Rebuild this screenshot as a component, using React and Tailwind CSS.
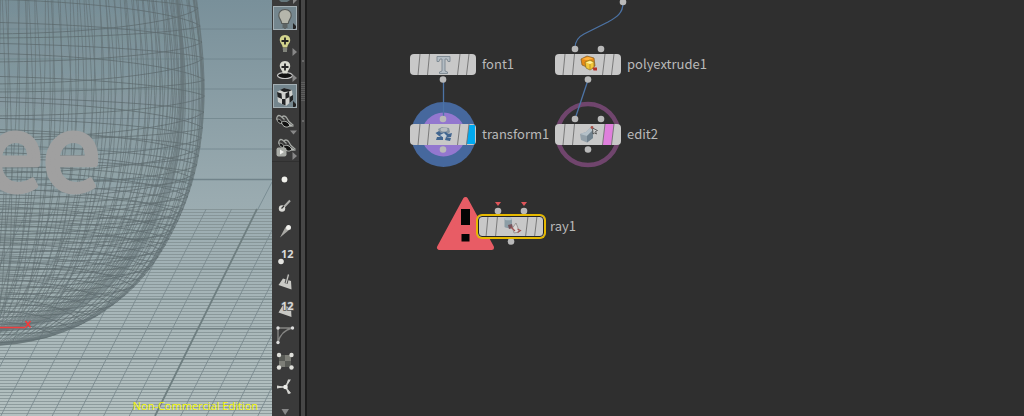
import React from "react";

const OUTLINE = [
  [197, -2], [201, 30], [204, 62], [205, 95], [203, 130], [198, 163], [189, 195],
  [179, 220], [165, 247], [149, 271], [130, 292], [103, 313], [78, 327], [48, 338], [15, 345], [-20, 347],
];

const toPath = (pts) => {
  let d = `M${pts[0][0]} ${pts[0][1]}`;
  for (let i = 1; i < pts.length - 1; i++) {
    const [x, y] = pts[i];
    const [nx, ny] = pts[i + 1];
    d += `Q${x} ${y} ${(x + nx) / 2} ${(y + ny) / 2}`;
  }
  const last = pts[pts.length - 1];
  return `${d}L${last[0]} ${last[1]}`;
};

const meridian = (sx, sy, lean = 0) =>
  toPath(OUTLINE.map(([x, y]) => [-20 + (x + 20) * sx + lean * (y - 100) * 0.1, y * sy]));

const edgeAt = (y) => {
  for (let i = 1; i < OUTLINE.length; i++) {
    const [x0, y0] = OUTLINE[i - 1];
    const [x1, y1] = OUTLINE[i];
    if (y <= y1) return x0 + ((x1 - x0) * (y - y0)) / (y1 - y0);
  }
  return 0;
};

const outer = Array.from({ length: 46 }, (_, i) => meridian(Math.sin((i + 1) * 0.034 + (i % 3) * 0.006), 1, (i % 4) * 0.12));
const inner = Array.from({ length: 34 }, (_, i) => meridian(Math.sin((i + 1) * 0.046) * 0.9, 0.955, -0.35 + (i % 3) * 0.1));
const levels = [8, 26, 42, 58, 80, 96, 112, 128, 138, 147, 156, 165];
for (let y = 173; y < 340; y += 6) levels.push(y);
const rings = levels.flatMap((y, i) => {
  const x = edgeAt(y);
  const down = [26, 12, 20][i % 3];
  const up = [12, 24, 17][i % 3];
  return [
    `M${x} ${y}C${x - 14} ${y + down * 0.5} ${x * 0.5} ${y + down} -20 ${y + down}`,
    `M${x} ${y}C${x - 14} ${y - up * 0.4} ${x * 0.6} ${y - up} -20 ${y - up - 3}`,
  ];
});
const floorRows = Array.from({ length: 70 }, (_, i) => `M0 ${209.5 + i * 3}H272`).join("");
const floorDiagonals = Array.from({ length: 16 }, (_, i) => i - 10)
  .filter((k) => k !== 0)
  .map((k) => `M${257 + k * 25.4} 209L${155 + k * 25.7} 416`)
  .join("");

function Viewport() {
  return (
    <section className="relative w-[272px] shrink-0 overflow-hidden bg-[#8b9ea6]" aria-label="Scene view">
      <svg className="block h-full w-full" viewBox="0 0 272 416" preserveAspectRatio="xMinYMin slice">
        <defs>
          <linearGradient id="sky" x1="0" y1="0" x2="0" y2="1">
            <stop offset="0" stopColor="#79909a" />
            <stop offset="0.48" stopColor="#9aabb0" />
            <stop offset="1" stopColor="#b4c1c1" />
          </linearGradient>
          <clipPath id="shape">
            <path d={`${toPath(OUTLINE)}V-2Z`} />
          </clipPath>
        </defs>
        <path d="M0 0H272V416H0Z" fill="url(#sky)" />
        <path d="M0 29H272M0 59H272M0 89H272M0 118.5H272M0 149H272M272 182L258 209" stroke="#6d8189" strokeWidth="1" fill="none" opacity="0.7" />
        <path d="M0 179.5H272" stroke="#71838a" strokeWidth="1.5" />
        <path d={floorRows} stroke="#7f8d8f" strokeWidth="1" opacity="0.72" />
        <path d="M0 239H272M0 269H272M0 299H272M0 328.5H272M0 358.5H272M0 389H272" stroke="#728184" strokeWidth="1.2" />
        <path d={floorDiagonals} stroke="#7b8a8e" strokeWidth="0.9" />
        <path d="M257 209L155 416" stroke="#6e7e80" strokeWidth="1.8" />
        <g clipPath="url(#shape)">
          <path d={`${toPath(OUTLINE)}V-2Z`} fill="#78868a" opacity="0.16" />
          <g fill="none" stroke="#606c6f" strokeWidth="0.9" opacity="0.62">
            {outer.map((d, i) => <path key={i} d={d} />)}
            {inner.map((d, i) => <path key={i} d={d} />)}
          </g>
          <g fill="none" stroke="#5a676a" strokeWidth="0.9" opacity="0.75">
            {rings.map((d, i) => <path key={i} d={d} />)}
          </g>
          <path d={meridian(0.905, 0.955)} fill="none" stroke="#637176" strokeWidth="4" opacity="0.5" />
          <path d={meridian(0.99, 0.995)} fill="none" stroke="#637176" strokeWidth="3" opacity="0.5" />
        </g>
        <text x="100" y="191" textAnchor="end" strokeWidth="5" strokeLinejoin="round" className="fill-[#a0a0a0] stroke-[#a0a0a0] font-['Noto_Sans_CJK_SC',sans-serif] text-[104px] font-normal">ee</text>
        <path d="M0 327.5H25" stroke="#f04040" strokeWidth="1.5" />
        <path d="M25.5 321L30.5 327.5M30.5 321L25.5 327.5" stroke="#f23a3a" strokeWidth="1.6" />
      </svg>
      <p className="absolute right-[14px] bottom-[2px] font-['Open_Sans',sans-serif] text-[11px] leading-4 whitespace-nowrap text-[#f6f800]">
        Non-Commercial Edition
      </p>
    </section>
  );
}

const bulb = (fill, dark) => (
  <>
    <path d="M13 4.5C8.8 4.5 6.5 7.5 6.8 10.8C7 13.5 9.3 15 9.8 18.5H16.2C16.7 15 19 13.5 19.2 10.8C19.5 7.5 17.2 4.5 13 4.5Z" fill={fill} stroke={dark} strokeWidth="1.2" />
    <path d="M10.5 20H15.5M10.5 22H15.5M12 24H14" stroke={dark} strokeWidth="1.3" />
  </>
);
const smallBulb = (fill) => (
  <>
    <path d="M13 3C9.3 3 7.5 5.800 7.800 8.600C8 11 10.500 12.500 10.800 15.500H15.200C15.500 12.500 18 11 18.200 8.600C18.500 5.800 16.700 3 13 3Z" fill={fill} />
    <path d="M13 5.500V12.500M9.500 9H16.500" stroke="#252525" strokeWidth="1.8" />
  </>
);
const glasses = (
  <>
    <path d="M5 10C4 7 6 4.5 8.5 6L12.500 9.500M10 7.500C10.500 5.500 13 5.500 14.500 7.500L17 11.500L21.500 15.500" fill="none" stroke="#a6a9a5" strokeWidth="1.300" />
    <path d="M5 9.500C7 8.500 9.800 10 10.200 13.500C7.800 14 5.500 12.500 5 9.500Z" fill="#191919" stroke="#a9aca8" strokeWidth="0.9" />
    <path d="M9.500 12.500C12 10 16 11.500 18 15.500C15.500 18.500 10.500 17 9.500 12.500Z" fill="#111" stroke="#b6b9b5" strokeWidth="1" />
    <path d="M16.500 13L22 16.500L17.500 16.800Z" fill="#b6b9b5" />
  </>
);
const corner = <path d="M20.5 16L25 20L20.5 24Z" fill="#888" />;
const numeral = (
  <text x="9" y="13" className="fill-[#d8d8d8] font-['Noto_Sans',sans-serif] text-[11px] font-bold">12</text>
);

const TOOLS = [
  { name: "Normal lighting", active: true, icon: <>{bulb("#b5b6ab", "#565a58")}<path d="M21 18L25 22L21 26Z" fill="#222" /></> },
  { name: "High quality lighting", icon: <>{smallBulb("#d3d48d")}<path d="M10.8 17H15.2M11 19H15" stroke="#999d91" strokeWidth="1.5" />{corner}</> },
  { name: "High quality lighting with shadows", icon: <><ellipse cx="13" cy="17.5" rx="7.5" ry="3" fill="#111" stroke="#c6c6c6" strokeWidth="1.2" />{smallBulb("#d8d9cf")}{corner}</> },
  {
    name: "Textures", active: true, icon: (
      <>
        <path d="M5 9L12 5L20 7L21 17L14 23L6 19Z" fill="#cfd1ce" />
        <path d="M8 7L12 5L16 6L12 9ZM5 9L9.5 10.5L10 16L5.500 14ZM13.5 10.500L17 8.500L17.5 14L13.5 16ZM10 16H13.500V22.500L10 21ZM17.5 14L21 12V17L17.5 20ZM16 6L20 7L17 8.5L12 9Z" fill="#212325" />
        <path d="M21 18L25 22L21 26Z" fill="#222" />
      </>
    ),
  },
  { name: "Visibility", icon: <>{glasses}<path d="M18 20.5H25L21.5 24.5Z" fill="#888" /></> },
  { name: "Display options", icon: <><g transform="translate(2 -2)">{glasses}</g><rect x="4.5" y="11.5" width="10" height="9" rx="2" fill="#a9aca7" /><path d="M8 13.5L12 16L8 18.5Z" fill="#f0f0ed" />{corner}</> },
  { name: "Points", group: true, icon: <circle cx="12.5" cy="12.5" r="2.9" fill="#f1f1ec" /> },
  { name: "Point normals", icon: <><path d="M11 15L18 7.5" stroke="#b0b0ad" strokeWidth="2" /><circle cx="10" cy="15.5" r="3.2" fill="#d8d8d4" /><path d="M9.500 15.5L12 13" stroke="#333" strokeWidth="1.3" /></> },
  { name: "Point trails", icon: <><path d="M8 18.5L13.5 8L17 11Z" fill="#aaa9a5" /><circle cx="16.5" cy="8.5" r="2.5" fill="#f2f2ef" /></> },
  { name: "Point numbers", icon: <><circle cx="9" cy="16.5" r="2.8" fill="#e3e3df" />{numeral}</> },
  { name: "Primitive normals", icon: <><path d="M11 7.500L19 10L19.5 18.5L6.500 14Z" fill="#c9c9c5" /><path d="M14 12.500L16.5 3.500" stroke="#454545" strokeWidth="3" /><path d="M14 12.500L16.5 3.500" stroke="#c6c6c2" strokeWidth="1.2" /></> },
  { name: "Primitive numbers", icon: <><path d="M11 8L19 11L19.5 20L6.500 15.500Z" fill="#c9c9c5" /><g stroke="#555" strokeWidth="1.500" paintOrder="stroke">{numeral}</g></> },
  { name: "Primitive hulls", icon: <><path d="M6 19.500V5H20C12 7 8 11.500 6 19.500Z" fill="none" stroke="#858583" strokeWidth="1.4" /><circle cx="6" cy="5" r="1.7" fill="#ddd" /><circle cx="20.5" cy="5" r="1.7" fill="#ddd" /><circle cx="6" cy="19.500" r="1.7" fill="#ddd" /></> },
  { name: "Vertex markers", icon: <><path d="M7 6H19V18H7Z" fill="#7d7e77" /><path d="M7 6H13V12H7ZM13 12H19V18H13Z" fill="#595b56" />{[[7, 6], [19.5, 6], [7, 18.5], [19.5, 18.5]].map(([x, y]) => <circle key={`${x}-${y}`} cx={x} cy={y} r="2.2" fill="#e1e1dc" />)}</> },
  { name: "Vertex normals", icon: <><path d="M13.5 12L17.5 5M13.5 12L18 18.500M13.5 12H6" stroke="#aaa" strokeWidth="1.6" /><path d="M13.5 12L19 4.5L16 4.500ZM13.5 12L5 10.500V13.500ZM13.5 12L16 19L19 18Z" fill="#d4d4d0" /><circle cx="13.5" cy="12" r="2.3" fill="#eeeeea" /></> },
];

function Toolbar() {
  return (
    <nav aria-label="Display toolbar" className="flex w-[27px] shrink-0 flex-col overflow-hidden bg-[#3a3a3a]">
      <button type="button" aria-label="Shading" className="h-[5px] shrink-0">
        <svg className="block" width="26" height="5" viewBox="0 0 26 5"><path d="M7 0H18L15 2H9Z" fill="#65777c" /><path d="M21 0H25L21 4Z" fill="#888" /></svg>
      </button>
      {TOOLS.map((tool) => (
        <React.Fragment key={tool.name}>
          {tool.group && <hr className="mb-1 w-full shrink-0 border-t border-[#303030]" />}
          <button type="button" aria-label={tool.name} aria-pressed={!!tool.active} className="h-[26px] shrink-0 py-px pl-px">
            <span className={tool.active ? "block h-6 w-6 overflow-hidden border border-[#a3afb4] bg-[#74868e]" : "block h-6 w-6"}>
              <svg className={tool.active ? "-m-0.5 block" : "-m-px block"} width="26" height="26" viewBox="0 0 26 26">{tool.icon}</svg>
            </span>
          </button>
        </React.Fragment>
      ))}
      <button type="button" aria-label="More" className="h-4 shrink-0">
        <svg className="block" width="26" height="16" viewBox="0 0 26 16"><path d="M9.5 9H17L13.2 15Z" fill="#888" /></svg>
      </button>
    </nav>
  );
}

function Splitter() {
  return (
    <div role="separator" aria-orientation="vertical" className="w-2 shrink-0 border-x-2 border-[#1c1c1c] bg-[#474747]">
      <svg className="block" width="4" height="130" viewBox="0 0 4 130">
        <path d="M1 82V101M3 82V101" stroke="#777" strokeWidth="1" strokeDasharray="1 1" />
        <path d="M1 61H3M1 121H3" stroke="#777" strokeWidth="1.500" />
      </svg>
    </div>
  );
}

const ICONS = {
  font: (
    <path d="M27 2.5H40V7.5H38L37 5H35V17L37.5 18V19.5H29.5V18L32 17V5H30L29 7.5H27Z" fill="#b3bcc3" stroke="#7b8790" strokeWidth="0.9" />
  ),
  transform: (
    <>
      <path d="M28 5L32 3L39 4L40 8L37 11L30 10Z" fill="#8794a0" />
      <path d="M25.5 9L29 7L31 9L36 8L38 10L42 9L41 13H37L35 12L31 13L29 12ZM27 13H33V16H26ZM36 13L41 14L40 17L35 16Z" fill="#41658f" />
      <ellipse cx="34" cy="5.5" rx="3.5" ry="2" fill="#b9bec1" />
      <path d="M30 11L34 9L37 12L34 14Z" fill="#c6d0d8" />
    </>
  ),
  extrude: (
    <>
      <path d="M26 5L32 2L39 4L40 12L34 14L27 11Z" fill="#e78b16" stroke="#7e5a24" strokeWidth="0.7" />
      <path d="M27 5L33 3L38 4.5L33 6.5Z" fill="#ffb23c" />
      <path d="M30 8L35 6L39 8V13.5L35 16L31 14Z" fill="#f2c83b" stroke="#896d22" strokeWidth="0.7" />
      <path d="M31 8.5L35 7L38 8.5L35 10Z" fill="#fff09a" /><path d="M35 10V15.5" stroke="#ad8629" strokeWidth="0.8" />
      <path d="M37.500 13.500H42V16.500H38.500Z" fill="#b5322a" />
    </>
  ),
  edit: (
    <>
      <path d="M25 10L31 8L36 3L38 6L38 14L32 18.500L26 16Z" fill="#93a0a9" />
      <path d="M25 10L32 12L38 6L36 3L31 8Z" fill="#b4c0c8" /><path d="M32 12V18.500L38 14V6Z" fill="#71828e" />
      <path d="M37.500 4L42.500 6.500L40.500 7.500L41.5 10L39.5 9L38 10Z" fill="#ccc" stroke="#444" strokeWidth="0.8" /><circle cx="37" cy="3.500" r="1.4" fill="#a8524b" />
    </>
  ),
  ray: (
    <>
      <path d="M26.5 2.5C28 1 33 1 34 2.500V11C32 13 28 12 26.5 11Z" fill="#8c9da5" />
      <ellipse cx="30.3" cy="2.8" rx="3.7" ry="1.5" fill="#b3c2c8" />
      <path d="M30 9L34 8L35 12L31 13Z" fill="#75545b" />
      <path d="M34.500 12L38 7L40 12L41 16L36 17Z" fill="#dcd8d6" stroke="#857f7e" strokeWidth="0.7" />
      <path d="M33 11L37 15M39.500 13L42.500 14.500L39.500 16.500" stroke="#a25252" strokeWidth="1.1" fill="none" />
    </>
  ),
};

const NODES = [
  { name: "font1", icon: "font", x: 103, y: 54, inputs: [] },
  { name: "transform1", icon: "transform", x: 103, y: 124, inputs: [33], display: true },
  { name: "polyextrude1", icon: "extrude", x: 248, y: 54, inputs: [20, 46] },
  { name: "edit2", icon: "edit", x: 248, y: 124, inputs: [20, 46], template: true },
  { name: "ray1", icon: "ray", x: 171, y: 216, inputs: [20, 46], selected: true },
];

function Node({ node }) {
  return (
    <div className="absolute flex h-[21px] items-start gap-[6px]" style={{ left: node.x, top: node.y }}>
      <div className={node.selected
        ? "h-[21px] w-[66px] rounded bg-[#c8c8c8] ring-2 ring-[#e6b900] outline outline-1 -outline-offset-1 outline-[#252525]"
        : "h-[21px] w-[66px] overflow-hidden rounded bg-[#c8c8c8]"}>
        <svg className="block" width="66" height="21" viewBox="0 0 66 21">
          {node.display && <path d="M59 1H65V20H56.5Z" fill="#00a9f0" />}
          {node.template && <path d="M50 0H59L56.5 21H47.5Z" fill="#df7fdc" />}
          <path d="M10 0L8 21M19.5 0L17.5 21M50 0L47.5 21M59 0L56.5 21" stroke="#707070" strokeWidth="0.9" />
          {ICONS[node.icon]}
        </svg>
      </div>
      <span className="font-['Noto_Sans_CJK_SC',sans-serif] text-[13px] leading-5 whitespace-nowrap text-[#b9b9b9]">{node.name}</span>
    </div>
  );
}

function Network() {
  return (
    <main className="relative min-w-0 flex-1 overflow-hidden bg-[#2f2f2f]" aria-label="Network editor">
      <svg className="absolute top-0 left-0" width="717" height="416" viewBox="307 0 717 416">
        <circle cx="443.5" cy="134.500" r="32.5" fill="#46689d" />
        <circle cx="443.5" cy="134.500" r="22" fill="#9377cf" />
        <circle cx="588" cy="134.500" r="30.5" fill="none" stroke="#70456d" strokeWidth="4.500" />
        <path d="M443.5 80V119M588 80L575 119M623 3C623 13 617 17 608 22L584 34C578 37 575 42 575 48" fill="none" stroke="#4c73a5" strokeWidth="1.3" />
        <path d="M465.5 199.5L439.5 247.5H491.5Z" fill="#e85c65" stroke="#e85c65" strokeWidth="5" strokeLinejoin="round" />
        <path d="M461 209H470V225H461ZM461.5 234H469.5V241.5H461.5Z" fill="#050505" />
        <circle cx="623" cy="2" r="3.3" fill="#b9b9b9" />
        {NODES.map((node) => (
          <g key={node.name} fill="#b9b9b9">
            {node.inputs.map((dx) => (
              <React.Fragment key={dx}>
                <circle cx={307 + node.x + dx} cy={node.y - 5} r="3.3" />
                {node.selected && <path d={`M${304 + node.x + dx} 202H${310 + node.x + dx}L${307 + node.x + dx} 206Z`} fill="#df555a" />}
              </React.Fragment>
            ))}
            <circle cx={340 + node.x} cy={node.y + 25.5} r="3.3" />
          </g>
        ))}
      </svg>
      {NODES.map((node) => <Node key={node.name} node={node} />)}
    </main>
  );
}

export default function App() {
  return (
    <div className="flex h-screen overflow-hidden bg-[#2f2f2f]">
      <Viewport />
      <Toolbar />
      <Splitter />
      <Network />
    </div>
  );
}
